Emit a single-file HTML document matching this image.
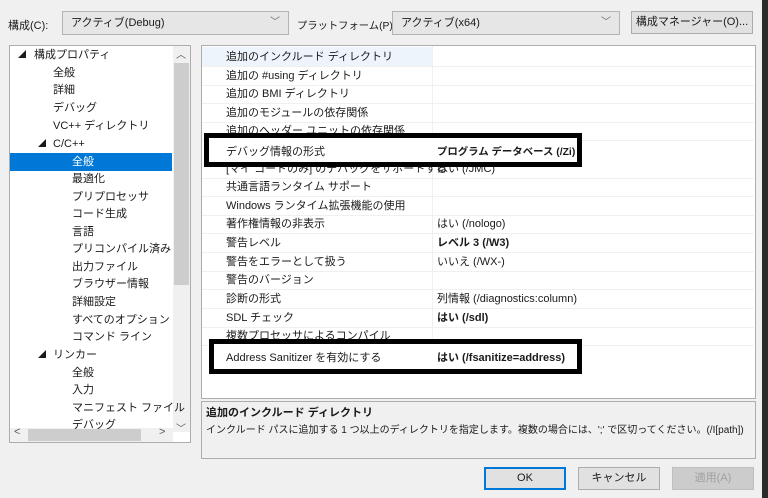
<!DOCTYPE html>
<html><head><meta charset="utf-8"><style>
*{margin:0;padding:0;box-sizing:border-box}
body{width:768px;height:498px;background:#f0f0f0;font-family:"Liberation Sans","Noto Sans CJK JP",sans-serif;font-size:11px;color:#1a1a1a;position:relative;overflow:hidden}
.a{position:absolute;white-space:nowrap}
.dd{position:absolute;border:1px solid #b4b4b4;background:#e6e6e6;height:24px;line-height:22px;padding-left:8px}
.chev{position:absolute;right:8px;top:0;color:#666;font-size:10px}
.btn{position:absolute;border:1px solid #adadad;background:#e1e1e1;height:23px;line-height:21px;text-align:center}
.tree div{position:absolute;white-space:nowrap;height:18px;line-height:18px}
.row{position:absolute;left:202px;width:552px;height:18.6px;border-bottom:1px solid #f0f0f0;line-height:18px}
.row span{position:absolute;left:24px}
.row b{position:absolute;left:235px;font-weight:normal}
.row b.s{font-weight:bold}
.box{position:absolute;border:5px solid #000}
</style></head><body>
<div class="a" style="left:8px;top:17px">構成(C):</div>
<div class="dd" style="left:62px;top:11px;width:227px">アクティブ(Debug)<span class="chev">﹀</span></div>
<div class="a" style="left:297px;top:17px;font-size:10.3px">プラットフォーム(P):</div>
<div class="dd" style="left:392px;top:11px;width:228px">アクティブ(x64)<span class="chev">﹀</span></div>
<div class="btn" style="left:631px;top:11px;width:122px">構成マネージャー(O)...</div>

<div class="a" style="left:9px;top:45px;width:182px;height:398px;background:#fff;border:1px solid #adadad"></div>
<div class="a" style="left:173px;top:46px;width:17px;height:386px;background:#f0f0f0"></div>
<div class="a" style="left:174px;top:63px;width:15px;height:222px;background:#cdcdcd"></div>
<div class="a" style="left:176px;top:46px;font-size:10px;color:#555">︿</div>
<div class="a" style="left:176px;top:420px;font-size:10px;color:#555">﹀</div>
<div class="a" style="left:10px;top:428px;width:163px;height:14px;background:#f0f0f0"></div>
<div class="a" style="left:28px;top:429px;width:113px;height:12px;background:#cdcdcd"></div>
<div class="a" style="left:14px;top:426px;color:#555">&lt;</div>
<div class="a" style="left:159px;top:426px;color:#555">&gt;</div>
<div class="a" style="left:10px;top:153px;width:162px;height:18px;background:#0078d7"></div>
<div class="tree">
<div style="left:18px;top:46px;font-size:8px">◢</div>
<div style="left:34px;top:46px">構成プロパティ</div>
<div style="left:53px;top:64px">全般</div>
<div style="left:53px;top:81px">詳細</div>
<div style="left:53px;top:99px">デバッグ</div>
<div style="left:53px;top:117px">VC++ ディレクトリ</div>
<div style="left:38px;top:135px;font-size:8px">◢</div>
<div style="left:53px;top:135px">C/C++</div>
<div style="left:72px;top:153px;color:#fff">全般</div>
<div style="left:72px;top:170px">最適化</div>
<div style="left:72px;top:188px">プリプロセッサ</div>
<div style="left:72px;top:205px">コード生成</div>
<div style="left:72px;top:223px">言語</div>
<div style="left:72px;top:240px;width:100px;overflow:hidden">プリコンパイル済みヘッダー</div>
<div style="left:72px;top:258px">出力ファイル</div>
<div style="left:72px;top:275px">ブラウザー情報</div>
<div style="left:72px;top:293px">詳細設定</div>
<div style="left:72px;top:311px">すべてのオプション</div>
<div style="left:72px;top:328px">コマンド ライン</div>
<div style="left:38px;top:346px;font-size:8px">◢</div>
<div style="left:53px;top:346px">リンカー</div>
<div style="left:72px;top:364px">全般</div>
<div style="left:72px;top:381px">入力</div>
<div style="left:72px;top:399px">マニフェスト ファイル</div>
<div style="left:72px;top:416px">デバッグ</div>
</div>

<div class="a" style="left:201px;top:45px;width:555px;height:354px;background:#fff;border:1px solid #adadad"></div>
<div class="a" style="left:202px;top:47px;width:230px;height:19px;background:#eef4fb"></div>
<div class="a" style="left:432px;top:46px;width:1px;height:300px;background:#f0f0f0"></div>
<div class="row" style="top:48px"><span>追加のインクルード ディレクトリ</span></div>
<div class="row" style="top:67px"><span>追加の #using ディレクトリ</span></div>
<div class="row" style="top:85px"><span>追加の BMI ディレクトリ</span></div>
<div class="row" style="top:104px"><span>追加のモジュールの依存関係</span></div>
<div class="row" style="top:122px"><span>追加のヘッダー ユニットの依存関係</span></div>
<div class="row" style="top:160px"><span>[マイ コードのみ] のデバッグをサポートする</span><b>はい (/JMC)</b></div>
<div class="row" style="top:178px"><span>共通言語ランタイム サポート</span></div>
<div class="row" style="top:197px"><span>Windows ランタイム拡張機能の使用</span></div>
<div class="row" style="top:215px"><span>著作権情報の非表示</span><b>はい (/nologo)</b></div>
<div class="row" style="top:234px"><span>警告レベル</span><b class="s">レベル 3 (/W3)</b></div>
<div class="row" style="top:253px"><span>警告をエラーとして扱う</span><b>いいえ (/WX-)</b></div>
<div class="row" style="top:271px"><span>警告のバージョン</span></div>
<div class="row" style="top:290px"><span>診断の形式</span><b>列情報 (/diagnostics:column)</b></div>
<div class="row" style="top:309px"><span>SDL チェック</span><b class="s">はい (/sdl)</b></div>
<div class="row" style="top:327px"><span>複数プロセッサによるコンパイル</span></div>
<div class="box" style="left:204px;top:133px;width:378px;height:34px;background:#fff"></div>
<div class="a" style="left:226px;top:143px">デバッグ情報の形式</div>
<div class="a" style="left:437px;top:143px;font-weight:bold;font-size:10.4px">プログラム データベース (/Zi)</div>
<div class="box" style="left:209px;top:339px;width:373px;height:35px;background:#fff"></div>
<div class="a" style="left:226px;top:349px">Address Sanitizer を有効にする</div>
<div class="a" style="left:437px;top:349px;font-weight:bold">はい (/fsanitize=address)</div>

<div class="a" style="left:201px;top:401px;width:555px;height:58px;border:1px solid #adadad"></div>
<div class="a" style="left:206px;top:404px;font-weight:bold">追加のインクルード ディレクトリ</div>
<div class="a" style="left:206px;top:421px;font-size:10px">インクルード パスに追加する 1 つ以上のディレクトリを指定します。複数の場合には、';' で区切ってください。(/I[path])</div>

<div class="btn" style="left:484px;top:467px;width:82px;border:2px solid #0078d7;line-height:19px">OK</div>
<div class="btn" style="left:578px;top:467px;width:82px">キャンセル</div>
<div class="btn" style="left:672px;top:467px;width:82px;color:#a0a0a0;background:#ccc;border-color:#bfbfbf">適用(A)</div>
<div class="a" style="left:762px;top:0;width:6px;height:498px;background:#2b2b2b"></div>
</body></html>
